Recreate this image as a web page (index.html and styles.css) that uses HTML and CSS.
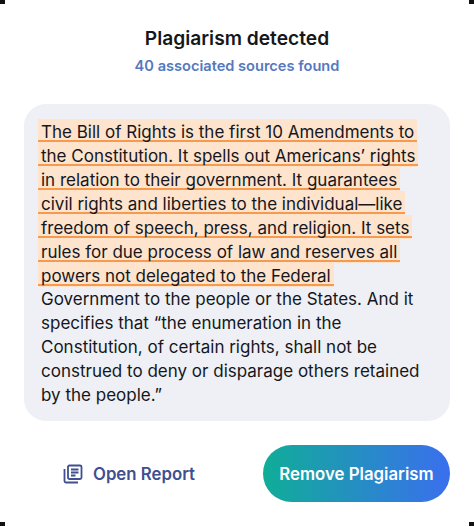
FILE: index.html
```html
<!DOCTYPE html>
<html>
<head>
    <meta charset="utf-8">
    <title>Plagiarism detected</title>
    <link rel="stylesheet" href="styles.css">
</head>
<body>
    <div class="corner corner-tl"></div>
    <div class="corner corner-tr"></div>
    <div class="corner corner-bl"></div>
    <div class="corner corner-br"></div>

    <div class="header">
        <div class="title">Plagiarism detected</div>
        <div class="subtitle">40 associated sources found</div>
    </div>

    <div class="text-card">
        <div class="line"><span class="mark">The Bill of Rights is the first 10 Amendments to</span></div>
        <div class="line"><span class="mark">the Constitution. It spells out Americans’ rights</span></div>
        <div class="line"><span class="mark">in relation to their government. It guarantees</span></div>
        <div class="line"><span class="mark">civil rights and liberties to the individual—like</span></div>
        <div class="line"><span class="mark">freedom of speech, press, and religion. It sets</span></div>
        <div class="line"><span class="mark">rules for due process of law and reserves all</span></div>
        <div class="line"><span class="mark">powers not delegated to the Federal</span></div>
        <div class="line">Government to the people or the States. And it</div>
        <div class="line">specifies that “the enumeration in the</div>
        <div class="line">Constitution, of certain rights, shall not be</div>
        <div class="line">construed to deny or disparage others retained</div>
        <div class="line">by the people.”</div>
    </div>

    <div class="actions">
        <div class="report-link">
            <svg class="report-icon" viewBox="0 0 20 20" fill="none" stroke="#3f4f8f" stroke-width="1.8">
                <rect x="5" y="1.5" width="13.5" height="13.5" rx="1.5"/>
                <path d="M1.5 5v12a1.5 1.5 0 0 0 1.5 1.5h12"/>
                <path d="M8 5.5h7.5M8 8.5h7.5M8 11.5h4.5"/>
            </svg>
            <span>Open Report</span>
        </div>
        <button class="remove-btn">Remove Plagiarism</button>
    </div>
</body>
</html>
```

FILE: styles.css
```css
body {
    margin: 0;
    height: 526px;
    overflow: hidden;
    background: #fff;
    font-family: Inter, "Liberation Sans", sans-serif;
    color: #15171c;
}

.corner {
    position: absolute;
    width: 5px;
    height: 4px;
    background: #111;
}

.corner-tl { top: 0; left: 0; }
.corner-tr { top: 0; right: 0; }
.corner-bl { bottom: 0; left: 0; }
.corner-br { bottom: 0; right: 0; }

.header {
    padding-top: 26px;
    text-align: center;
}

.title {
    font-size: 19.2px;
    line-height: 24px;
    font-weight: 600;
}

.subtitle {
    margin-top: 7px;
    font-size: 14.6px;
    line-height: 18px;
    font-weight: 600;
    color: #5578bf;
}

.text-card {
    margin: 29px 24px 0;
    height: 317px;
    padding: 15px 0 0 17px;
    box-sizing: border-box;
    background: #eef0f5;
    border-radius: 22px;
}

.line {
    height: 24px;
    line-height: 24px;
    font-size: 17px;
    white-space: nowrap;
}

.mark {
    display: inline-block;
    padding: 1px 3px 0;
    margin-left: -3px;
    height: 24px;
    box-sizing: border-box;
    background: linear-gradient(#f59a4e, #f59a4e) 0 21px / 100% 2px no-repeat, #fee3cd;
    line-height: 24px;
    vertical-align: top;
}

.actions {
    display: flex;
    align-items: center;
    margin-top: 24px;
}

.report-link {
    display: flex;
    align-items: center;
    gap: 10px;
    width: 263px;
    padding-left: 63px;
    box-sizing: border-box;
    font-size: 16.8px;
    font-weight: 600;
    color: #3f4f8f;
}

.report-icon {
    width: 20px;
    height: 20px;
}

.remove-btn {
    width: 187px;
    height: 57px;
    padding: 0;
    border: none;
    border-radius: 29px;
    background: linear-gradient(90deg, #10ad98, #3a6fee);
    color: #fff;
    font-family: inherit;
    font-size: 16.8px;
    font-weight: 600;
}
```
